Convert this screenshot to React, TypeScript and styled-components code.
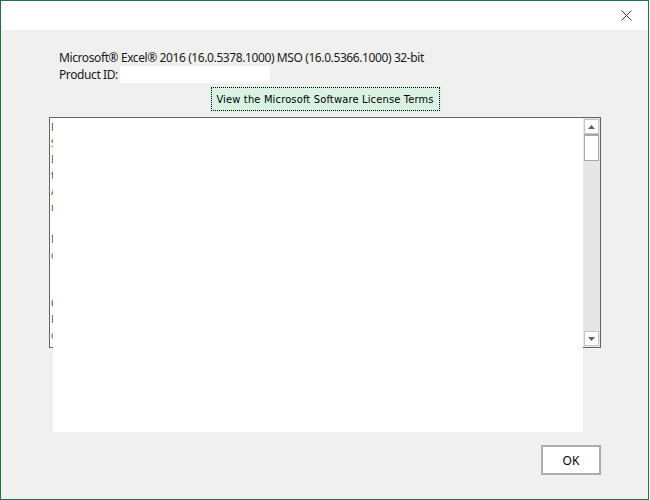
import React from 'react';
import styled, { createGlobalStyle } from 'styled-components';

const GlobalStyle = createGlobalStyle`
  html, body {
    margin: 0;
    padding: 0;
    background: #ffffff;
  }
  * {
    box-sizing: border-box;
  }
`;

const Window = styled.div`
  position: relative;
  width: 649px;
  height: 500px;
  border: 1px solid #1f7244;
  display: flex;
  flex-direction: column;
  font-family: 'Noto Sans', 'Open Sans', sans-serif;
  color: #1a1a1a;
`;

const TitleBar = styled.div`
  height: 29px;
  background: #ffffff;
  display: flex;
  justify-content: flex-end;
  align-items: center;
  padding-right: 16px;
`;

const CloseButton = styled.button`
  width: 12px;
  height: 12px;
  padding: 0;
  border: 0;
  background: transparent;
  display: flex;
  align-items: center;
  justify-content: center;
  cursor: pointer;
`;

const Body = styled.div`
  flex: 1;
  background: #f0f0f0;
  display: flex;
  flex-direction: column;
  padding: 20px 47px 24px 48px;
`;

const Info = styled.div`
  margin-left: 10px;
  font-size: 12px;
  line-height: 16px;
  letter-spacing: -0.4px;
  display: flex;
  flex-direction: column;
`;

const ProductRow = styled.div`
  display: flex;
  align-items: center;
  height: 17px;
`;

const ProductBox = styled.div`
  width: 150px;
  height: 17px;
  margin-left: 2px;
  background: #ffffff;
`;

const LicenseButton = styled.button`
  align-self: center;
  margin-top: 3px;
  width: 231px;
  height: 26px;
  padding: 0;
  border: 0;
  background: #d9f2e4;
  display: flex;
  align-items: center;
  justify-content: center;
  cursor: pointer;
`;

const FocusRing = styled.span`
  width: 229px;
  height: 24px;
  border: 1px dotted #000000;
  display: flex;
  align-items: center;
  justify-content: center;
  font-family: 'DejaVu Sans Condensed', 'DejaVu Sans', sans-serif;
  font-size: 11px;
  letter-spacing: 0.17px;
  color: #000000;
`;

const TextBox = styled.div`
  margin-top: 5px;
  height: 231px;
  border: 1px solid #646464;
  background: #ffffff;
  display: flex;
`;

const TextArea = styled.div`
  flex: 1;
  overflow: hidden;
  padding: 2px 0 0 1px;
  font-family: 'DejaVu Sans Condensed', 'DejaVu Sans', sans-serif;
  font-size: 11px;
  line-height: 16px;
  color: #555555;
  white-space: nowrap;
`;

const Line = styled.div`
  height: 16px;
`;

const Scrollbar = styled.div`
  width: 17px;
  background: #e6e6e6;
  display: flex;
  flex-direction: column;
  padding: 1px;
`;

const ArrowButton = styled.div<{ $down?: boolean }>`
  height: 15px;
  background: #ffffff;
  border: 1px solid #c4c4c4;
  display: flex;
  align-items: center;
  justify-content: center;
  margin-top: ${(p) => (p.$down ? 'auto' : '0')};
`;

const Thumb = styled.div`
  height: 27px;
  background: #ffffff;
  border: 1px solid #a8a8a8;
  border-top-width: 2px;
`;

const Cover = styled.div`
  position: absolute;
  left: 52px;
  top: 119px;
  width: 530px;
  height: 312px;
  background: #ffffff;
`;

const OkButton = styled.button`
  align-self: flex-end;
  margin-top: auto;
  width: 60px;
  height: 30px;
  border: 2px solid #adadad;
  background: #ffffff;
  font-family: 'Noto Sans', 'Open Sans', sans-serif;
  font-size: 12px;
  color: #000000;
  padding: 0;
  cursor: pointer;
`;

const lines = [
  'Portions of this software are based in part on the work of others.',
  'Some components are licensed under separate terms.',
  'Last updated for this release.',
  'for more information see the license terms.',
  'All rights reserved.',
  'reserved worldwide.',
  '',
  'Microsoft Corporation',
  'copyright notices',
  '',
  '',
  'Copyright',
  'International treaties',
  'contains third party code',
];

function Triangle({ down }: { down?: boolean }) {
  return (
    <svg width="7" height="4" viewBox="0 0 7 4">
      {down ? (
        <polygon points="0,0 7,0 3.5,4" fill="#606060" />
      ) : (
        <polygon points="0,4 7,4 3.5,0" fill="#606060" />
      )}
    </svg>
  );
}

export default function App() {
  return (
    <>
      <GlobalStyle />
      <Window>
        <TitleBar>
          <CloseButton aria-label="Close">
            <svg width="11" height="11" viewBox="0 0 11 11">
              <path d="M0.5 0.5 L10.5 10.5 M10.5 0.5 L0.5 10.5" stroke="#333333" strokeWidth="1" />
            </svg>
          </CloseButton>
        </TitleBar>
        <Body>
          <Info>
            <span>Microsoft® Excel® 2016 (16.0.5378.1000) MSO (16.0.5366.1000) 32-bit</span>
            <ProductRow>
              <span>Product ID:</span>
              <ProductBox />
            </ProductRow>
          </Info>
          <LicenseButton>
            <FocusRing>View the Microsoft Software License Terms</FocusRing>
          </LicenseButton>
          <TextBox>
            <TextArea>
              {lines.map((l, i) => (
                <Line key={i}>{l}</Line>
              ))}
            </TextArea>
            <Scrollbar>
              <ArrowButton>
                <Triangle />
              </ArrowButton>
              <Thumb />
              <ArrowButton $down>
                <Triangle down />
              </ArrowButton>
            </Scrollbar>
          </TextBox>
          <OkButton>OK</OkButton>
        </Body>
        <Cover />
      </Window>
    </>
  );
}
